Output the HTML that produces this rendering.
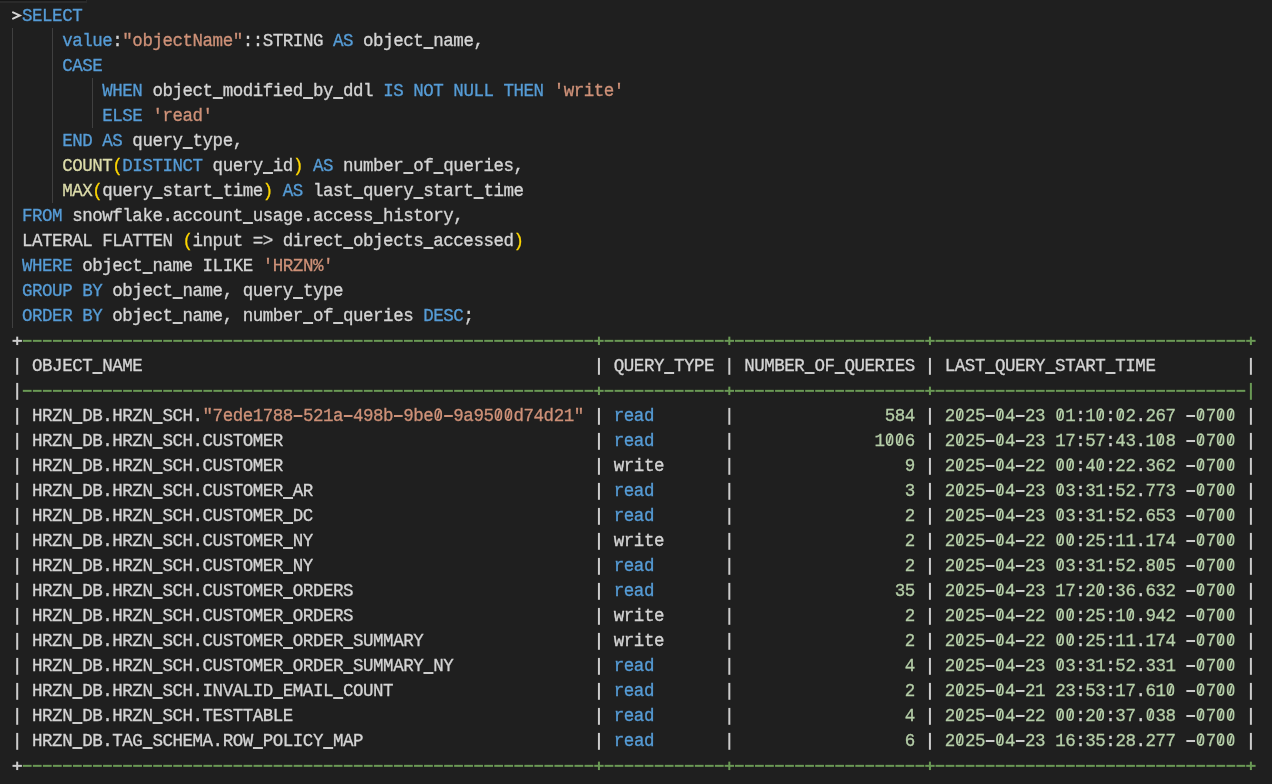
<!DOCTYPE html>
<html><head><meta charset="utf-8"><style>
html,body{margin:0;padding:0;}
body{width:1272px;height:784px;overflow:hidden;background:#1f1f1f;position:relative;}
.l{position:absolute;left:11.649999999999999px;height:25px;line-height:25px;white-space:pre;font-family:"Liberation Mono",monospace;font-size:17.5px;letter-spacing:-0.4717px;color:#d4d4d4;transform:scaleY(1.08);transform-origin:0 18px;will-change:transform;-webkit-text-stroke:0.3px currentColor;}
.tx{color:#d4d4d4} .kw{color:#569cd6} .st{color:#ce9178} .fn{color:#dcdcaa} .br{color:#ffd700} .nm{color:#b5cea8}
.g{position:absolute;width:1px;background:#404040;}
.tb{position:absolute;left:0;top:0;width:86px;height:1px;background:#161616;border-bottom:2px solid #2a2a2a;border-right:1px solid #2a2a2a;}
</style></head><body>
<div class="tb"></div>
<div class="g" style="left:12px;top:28px;height:300px"></div><div class="g" style="left:52px;top:28px;height:175px"></div><div class="g" style="left:92px;top:78px;height:50px"></div>
<svg width="1272" height="784" style="position:absolute;left:0;top:0"><polyline points="13.0,12.3 19.8,15.45 13.0,18.6" fill="none" stroke="#d4d4d4" stroke-width="2" stroke-linecap="round" stroke-linejoin="miter"/><rect x="423.43" y="47.00" width="10.0" height="2" fill="#cccccc"/><rect x="212.80" y="97.00" width="10.0" height="2" fill="#cccccc"/><rect x="303.07" y="97.00" width="10.0" height="2" fill="#cccccc"/><rect x="333.16" y="97.00" width="10.0" height="2" fill="#cccccc"/><rect x="182.71" y="147.00" width="10.0" height="2" fill="#cccccc"/><rect x="262.95" y="172.00" width="10.0" height="2" fill="#cccccc"/><rect x="403.37" y="172.00" width="10.0" height="2" fill="#cccccc"/><rect x="433.46" y="172.00" width="10.0" height="2" fill="#cccccc"/><rect x="152.62" y="197.00" width="10.0" height="2" fill="#cccccc"/><rect x="212.80" y="197.00" width="10.0" height="2" fill="#cccccc"/><rect x="353.22" y="197.00" width="10.0" height="2" fill="#cccccc"/><rect x="413.40" y="197.00" width="10.0" height="2" fill="#cccccc"/><rect x="473.58" y="197.00" width="10.0" height="2" fill="#cccccc"/><rect x="242.89" y="222.00" width="10.0" height="2" fill="#cccccc"/><rect x="373.28" y="222.00" width="10.0" height="2" fill="#cccccc"/><rect x="343.19" y="247.00" width="10.0" height="2" fill="#cccccc"/><rect x="423.43" y="247.00" width="10.0" height="2" fill="#cccccc"/><rect x="142.59" y="272.00" width="10.0" height="2" fill="#cccccc"/><rect x="172.68" y="297.00" width="10.0" height="2" fill="#cccccc"/><rect x="293.04" y="297.00" width="10.0" height="2" fill="#cccccc"/><rect x="172.68" y="322.00" width="10.0" height="2" fill="#cccccc"/><rect x="303.07" y="322.00" width="10.0" height="2" fill="#cccccc"/><rect x="333.16" y="322.00" width="10.0" height="2" fill="#cccccc"/><rect x="12.50" y="339.85" width="9.4" height="2" fill="#cccccc"/><rect x="16.20" y="336.65" width="2" height="8.4" fill="#cccccc"/><rect x="22.83" y="339.85" width="8.8" height="2" fill="#6a9955"/><rect x="32.86" y="339.85" width="8.8" height="2" fill="#6a9955"/><rect x="42.89" y="339.85" width="8.8" height="2" fill="#6a9955"/><rect x="52.92" y="339.85" width="8.8" height="2" fill="#6a9955"/><rect x="62.95" y="339.85" width="8.8" height="2" fill="#6a9955"/><rect x="72.98" y="339.85" width="8.8" height="2" fill="#6a9955"/><rect x="83.01" y="339.85" width="8.8" height="2" fill="#6a9955"/><rect x="93.04" y="339.85" width="8.8" height="2" fill="#6a9955"/><rect x="103.07" y="339.85" width="8.8" height="2" fill="#6a9955"/><rect x="113.10" y="339.85" width="8.8" height="2" fill="#6a9955"/><rect x="123.13" y="339.85" width="8.8" height="2" fill="#6a9955"/><rect x="133.16" y="339.85" width="8.8" height="2" fill="#6a9955"/><rect x="143.19" y="339.85" width="8.8" height="2" fill="#6a9955"/><rect x="153.22" y="339.85" width="8.8" height="2" fill="#6a9955"/><rect x="163.25" y="339.85" width="8.8" height="2" fill="#6a9955"/><rect x="173.28" y="339.85" width="8.8" height="2" fill="#6a9955"/><rect x="183.31" y="339.85" width="8.8" height="2" fill="#6a9955"/><rect x="193.34" y="339.85" width="8.8" height="2" fill="#6a9955"/><rect x="203.37" y="339.85" width="8.8" height="2" fill="#6a9955"/><rect x="213.40" y="339.85" width="8.8" height="2" fill="#6a9955"/><rect x="223.43" y="339.85" width="8.8" height="2" fill="#6a9955"/><rect x="233.46" y="339.85" width="8.8" height="2" fill="#6a9955"/><rect x="243.49" y="339.85" width="8.8" height="2" fill="#6a9955"/><rect x="253.52" y="339.85" width="8.8" height="2" fill="#6a9955"/><rect x="263.55" y="339.85" width="8.8" height="2" fill="#6a9955"/><rect x="273.58" y="339.85" width="8.8" height="2" fill="#6a9955"/><rect x="283.61" y="339.85" width="8.8" height="2" fill="#6a9955"/><rect x="293.64" y="339.85" width="8.8" height="2" fill="#6a9955"/><rect x="303.67" y="339.85" width="8.8" height="2" fill="#6a9955"/><rect x="313.70" y="339.85" width="8.8" height="2" fill="#6a9955"/><rect x="323.73" y="339.85" width="8.8" height="2" fill="#6a9955"/><rect x="333.76" y="339.85" width="8.8" height="2" fill="#6a9955"/><rect x="343.79" y="339.85" width="8.8" height="2" fill="#6a9955"/><rect x="353.82" y="339.85" width="8.8" height="2" fill="#6a9955"/><rect x="363.85" y="339.85" width="8.8" height="2" fill="#6a9955"/><rect x="373.88" y="339.85" width="8.8" height="2" fill="#6a9955"/><rect x="383.91" y="339.85" width="8.8" height="2" fill="#6a9955"/><rect x="393.94" y="339.85" width="8.8" height="2" fill="#6a9955"/><rect x="403.97" y="339.85" width="8.8" height="2" fill="#6a9955"/><rect x="414.00" y="339.85" width="8.8" height="2" fill="#6a9955"/><rect x="424.03" y="339.85" width="8.8" height="2" fill="#6a9955"/><rect x="434.06" y="339.85" width="8.8" height="2" fill="#6a9955"/><rect x="444.09" y="339.85" width="8.8" height="2" fill="#6a9955"/><rect x="454.12" y="339.85" width="8.8" height="2" fill="#6a9955"/><rect x="464.15" y="339.85" width="8.8" height="2" fill="#6a9955"/><rect x="474.18" y="339.85" width="8.8" height="2" fill="#6a9955"/><rect x="484.21" y="339.85" width="8.8" height="2" fill="#6a9955"/><rect x="494.24" y="339.85" width="8.8" height="2" fill="#6a9955"/><rect x="504.27" y="339.85" width="8.8" height="2" fill="#6a9955"/><rect x="514.30" y="339.85" width="8.8" height="2" fill="#6a9955"/><rect x="524.33" y="339.85" width="8.8" height="2" fill="#6a9955"/><rect x="534.36" y="339.85" width="8.8" height="2" fill="#6a9955"/><rect x="544.39" y="339.85" width="8.8" height="2" fill="#6a9955"/><rect x="554.42" y="339.85" width="8.8" height="2" fill="#6a9955"/><rect x="564.45" y="339.85" width="8.8" height="2" fill="#6a9955"/><rect x="574.48" y="339.85" width="8.8" height="2" fill="#6a9955"/><rect x="584.51" y="339.85" width="8.8" height="2" fill="#6a9955"/><rect x="594.24" y="339.85" width="9.4" height="2" fill="#6a9955"/><rect x="597.94" y="336.65" width="2" height="8.4" fill="#6a9955"/><rect x="604.57" y="339.85" width="8.8" height="2" fill="#6a9955"/><rect x="614.60" y="339.85" width="8.8" height="2" fill="#6a9955"/><rect x="624.63" y="339.85" width="8.8" height="2" fill="#6a9955"/><rect x="634.66" y="339.85" width="8.8" height="2" fill="#6a9955"/><rect x="644.69" y="339.85" width="8.8" height="2" fill="#6a9955"/><rect x="654.72" y="339.85" width="8.8" height="2" fill="#6a9955"/><rect x="664.75" y="339.85" width="8.8" height="2" fill="#6a9955"/><rect x="674.78" y="339.85" width="8.8" height="2" fill="#6a9955"/><rect x="684.81" y="339.85" width="8.8" height="2" fill="#6a9955"/><rect x="694.84" y="339.85" width="8.8" height="2" fill="#6a9955"/><rect x="704.87" y="339.85" width="8.8" height="2" fill="#6a9955"/><rect x="714.90" y="339.85" width="8.8" height="2" fill="#6a9955"/><rect x="724.63" y="339.85" width="9.4" height="2" fill="#6a9955"/><rect x="728.33" y="336.65" width="2" height="8.4" fill="#6a9955"/><rect x="734.96" y="339.85" width="8.8" height="2" fill="#6a9955"/><rect x="744.99" y="339.85" width="8.8" height="2" fill="#6a9955"/><rect x="755.02" y="339.85" width="8.8" height="2" fill="#6a9955"/><rect x="765.05" y="339.85" width="8.8" height="2" fill="#6a9955"/><rect x="775.08" y="339.85" width="8.8" height="2" fill="#6a9955"/><rect x="785.11" y="339.85" width="8.8" height="2" fill="#6a9955"/><rect x="795.14" y="339.85" width="8.8" height="2" fill="#6a9955"/><rect x="805.17" y="339.85" width="8.8" height="2" fill="#6a9955"/><rect x="815.20" y="339.85" width="8.8" height="2" fill="#6a9955"/><rect x="825.23" y="339.85" width="8.8" height="2" fill="#6a9955"/><rect x="835.26" y="339.85" width="8.8" height="2" fill="#6a9955"/><rect x="845.29" y="339.85" width="8.8" height="2" fill="#6a9955"/><rect x="855.32" y="339.85" width="8.8" height="2" fill="#6a9955"/><rect x="865.35" y="339.85" width="8.8" height="2" fill="#6a9955"/><rect x="875.38" y="339.85" width="8.8" height="2" fill="#6a9955"/><rect x="885.41" y="339.85" width="8.8" height="2" fill="#6a9955"/><rect x="895.44" y="339.85" width="8.8" height="2" fill="#6a9955"/><rect x="905.47" y="339.85" width="8.8" height="2" fill="#6a9955"/><rect x="915.50" y="339.85" width="8.8" height="2" fill="#6a9955"/><rect x="925.23" y="339.85" width="9.4" height="2" fill="#6a9955"/><rect x="928.93" y="336.65" width="2" height="8.4" fill="#6a9955"/><rect x="935.56" y="339.85" width="8.8" height="2" fill="#6a9955"/><rect x="945.59" y="339.85" width="8.8" height="2" fill="#6a9955"/><rect x="955.62" y="339.85" width="8.8" height="2" fill="#6a9955"/><rect x="965.65" y="339.85" width="8.8" height="2" fill="#6a9955"/><rect x="975.68" y="339.85" width="8.8" height="2" fill="#6a9955"/><rect x="985.71" y="339.85" width="8.8" height="2" fill="#6a9955"/><rect x="995.74" y="339.85" width="8.8" height="2" fill="#6a9955"/><rect x="1005.77" y="339.85" width="8.8" height="2" fill="#6a9955"/><rect x="1015.80" y="339.85" width="8.8" height="2" fill="#6a9955"/><rect x="1025.83" y="339.85" width="8.8" height="2" fill="#6a9955"/><rect x="1035.86" y="339.85" width="8.8" height="2" fill="#6a9955"/><rect x="1045.89" y="339.85" width="8.8" height="2" fill="#6a9955"/><rect x="1055.92" y="339.85" width="8.8" height="2" fill="#6a9955"/><rect x="1065.95" y="339.85" width="8.8" height="2" fill="#6a9955"/><rect x="1075.98" y="339.85" width="8.8" height="2" fill="#6a9955"/><rect x="1086.01" y="339.85" width="8.8" height="2" fill="#6a9955"/><rect x="1096.04" y="339.85" width="8.8" height="2" fill="#6a9955"/><rect x="1106.07" y="339.85" width="8.8" height="2" fill="#6a9955"/><rect x="1116.10" y="339.85" width="8.8" height="2" fill="#6a9955"/><rect x="1126.13" y="339.85" width="8.8" height="2" fill="#6a9955"/><rect x="1136.16" y="339.85" width="8.8" height="2" fill="#6a9955"/><rect x="1146.19" y="339.85" width="8.8" height="2" fill="#6a9955"/><rect x="1156.22" y="339.85" width="8.8" height="2" fill="#6a9955"/><rect x="1166.25" y="339.85" width="8.8" height="2" fill="#6a9955"/><rect x="1176.28" y="339.85" width="8.8" height="2" fill="#6a9955"/><rect x="1186.31" y="339.85" width="8.8" height="2" fill="#6a9955"/><rect x="1196.34" y="339.85" width="8.8" height="2" fill="#6a9955"/><rect x="1206.37" y="339.85" width="8.8" height="2" fill="#6a9955"/><rect x="1216.40" y="339.85" width="8.8" height="2" fill="#6a9955"/><rect x="1226.43" y="339.85" width="8.8" height="2" fill="#6a9955"/><rect x="1236.46" y="339.85" width="8.8" height="2" fill="#6a9955"/><rect x="1246.19" y="339.85" width="9.4" height="2" fill="#6a9955"/><rect x="1249.89" y="336.65" width="2" height="8.4" fill="#6a9955"/><rect x="16.20" y="357.90" width="2" height="16.9" fill="#cccccc"/><rect x="92.44" y="372.00" width="10.0" height="2" fill="#cccccc"/><rect x="597.94" y="357.90" width="2" height="16.9" fill="#cccccc"/><rect x="664.15" y="372.00" width="10.0" height="2" fill="#cccccc"/><rect x="728.33" y="357.90" width="2" height="16.9" fill="#cccccc"/><rect x="804.57" y="372.00" width="10.0" height="2" fill="#cccccc"/><rect x="834.66" y="372.00" width="10.0" height="2" fill="#cccccc"/><rect x="928.93" y="357.90" width="2" height="16.9" fill="#cccccc"/><rect x="985.11" y="372.00" width="10.0" height="2" fill="#cccccc"/><rect x="1045.29" y="372.00" width="10.0" height="2" fill="#cccccc"/><rect x="1105.47" y="372.00" width="10.0" height="2" fill="#cccccc"/><rect x="1249.89" y="357.90" width="2" height="16.9" fill="#cccccc"/><rect x="16.20" y="382.90" width="2" height="16.9" fill="#cccccc"/><rect x="22.83" y="389.85" width="8.8" height="2" fill="#6a9955"/><rect x="32.86" y="389.85" width="8.8" height="2" fill="#6a9955"/><rect x="42.89" y="389.85" width="8.8" height="2" fill="#6a9955"/><rect x="52.92" y="389.85" width="8.8" height="2" fill="#6a9955"/><rect x="62.95" y="389.85" width="8.8" height="2" fill="#6a9955"/><rect x="72.98" y="389.85" width="8.8" height="2" fill="#6a9955"/><rect x="83.01" y="389.85" width="8.8" height="2" fill="#6a9955"/><rect x="93.04" y="389.85" width="8.8" height="2" fill="#6a9955"/><rect x="103.07" y="389.85" width="8.8" height="2" fill="#6a9955"/><rect x="113.10" y="389.85" width="8.8" height="2" fill="#6a9955"/><rect x="123.13" y="389.85" width="8.8" height="2" fill="#6a9955"/><rect x="133.16" y="389.85" width="8.8" height="2" fill="#6a9955"/><rect x="143.19" y="389.85" width="8.8" height="2" fill="#6a9955"/><rect x="153.22" y="389.85" width="8.8" height="2" fill="#6a9955"/><rect x="163.25" y="389.85" width="8.8" height="2" fill="#6a9955"/><rect x="173.28" y="389.85" width="8.8" height="2" fill="#6a9955"/><rect x="183.31" y="389.85" width="8.8" height="2" fill="#6a9955"/><rect x="193.34" y="389.85" width="8.8" height="2" fill="#6a9955"/><rect x="203.37" y="389.85" width="8.8" height="2" fill="#6a9955"/><rect x="213.40" y="389.85" width="8.8" height="2" fill="#6a9955"/><rect x="223.43" y="389.85" width="8.8" height="2" fill="#6a9955"/><rect x="233.46" y="389.85" width="8.8" height="2" fill="#6a9955"/><rect x="243.49" y="389.85" width="8.8" height="2" fill="#6a9955"/><rect x="253.52" y="389.85" width="8.8" height="2" fill="#6a9955"/><rect x="263.55" y="389.85" width="8.8" height="2" fill="#6a9955"/><rect x="273.58" y="389.85" width="8.8" height="2" fill="#6a9955"/><rect x="283.61" y="389.85" width="8.8" height="2" fill="#6a9955"/><rect x="293.64" y="389.85" width="8.8" height="2" fill="#6a9955"/><rect x="303.67" y="389.85" width="8.8" height="2" fill="#6a9955"/><rect x="313.70" y="389.85" width="8.8" height="2" fill="#6a9955"/><rect x="323.73" y="389.85" width="8.8" height="2" fill="#6a9955"/><rect x="333.76" y="389.85" width="8.8" height="2" fill="#6a9955"/><rect x="343.79" y="389.85" width="8.8" height="2" fill="#6a9955"/><rect x="353.82" y="389.85" width="8.8" height="2" fill="#6a9955"/><rect x="363.85" y="389.85" width="8.8" height="2" fill="#6a9955"/><rect x="373.88" y="389.85" width="8.8" height="2" fill="#6a9955"/><rect x="383.91" y="389.85" width="8.8" height="2" fill="#6a9955"/><rect x="393.94" y="389.85" width="8.8" height="2" fill="#6a9955"/><rect x="403.97" y="389.85" width="8.8" height="2" fill="#6a9955"/><rect x="414.00" y="389.85" width="8.8" height="2" fill="#6a9955"/><rect x="424.03" y="389.85" width="8.8" height="2" fill="#6a9955"/><rect x="434.06" y="389.85" width="8.8" height="2" fill="#6a9955"/><rect x="444.09" y="389.85" width="8.8" height="2" fill="#6a9955"/><rect x="454.12" y="389.85" width="8.8" height="2" fill="#6a9955"/><rect x="464.15" y="389.85" width="8.8" height="2" fill="#6a9955"/><rect x="474.18" y="389.85" width="8.8" height="2" fill="#6a9955"/><rect x="484.21" y="389.85" width="8.8" height="2" fill="#6a9955"/><rect x="494.24" y="389.85" width="8.8" height="2" fill="#6a9955"/><rect x="504.27" y="389.85" width="8.8" height="2" fill="#6a9955"/><rect x="514.30" y="389.85" width="8.8" height="2" fill="#6a9955"/><rect x="524.33" y="389.85" width="8.8" height="2" fill="#6a9955"/><rect x="534.36" y="389.85" width="8.8" height="2" fill="#6a9955"/><rect x="544.39" y="389.85" width="8.8" height="2" fill="#6a9955"/><rect x="554.42" y="389.85" width="8.8" height="2" fill="#6a9955"/><rect x="564.45" y="389.85" width="8.8" height="2" fill="#6a9955"/><rect x="574.48" y="389.85" width="8.8" height="2" fill="#6a9955"/><rect x="584.51" y="389.85" width="8.8" height="2" fill="#6a9955"/><rect x="594.24" y="389.85" width="9.4" height="2" fill="#6a9955"/><rect x="597.94" y="386.65" width="2" height="8.4" fill="#6a9955"/><rect x="604.57" y="389.85" width="8.8" height="2" fill="#6a9955"/><rect x="614.60" y="389.85" width="8.8" height="2" fill="#6a9955"/><rect x="624.63" y="389.85" width="8.8" height="2" fill="#6a9955"/><rect x="634.66" y="389.85" width="8.8" height="2" fill="#6a9955"/><rect x="644.69" y="389.85" width="8.8" height="2" fill="#6a9955"/><rect x="654.72" y="389.85" width="8.8" height="2" fill="#6a9955"/><rect x="664.75" y="389.85" width="8.8" height="2" fill="#6a9955"/><rect x="674.78" y="389.85" width="8.8" height="2" fill="#6a9955"/><rect x="684.81" y="389.85" width="8.8" height="2" fill="#6a9955"/><rect x="694.84" y="389.85" width="8.8" height="2" fill="#6a9955"/><rect x="704.87" y="389.85" width="8.8" height="2" fill="#6a9955"/><rect x="714.90" y="389.85" width="8.8" height="2" fill="#6a9955"/><rect x="724.63" y="389.85" width="9.4" height="2" fill="#6a9955"/><rect x="728.33" y="386.65" width="2" height="8.4" fill="#6a9955"/><rect x="734.96" y="389.85" width="8.8" height="2" fill="#6a9955"/><rect x="744.99" y="389.85" width="8.8" height="2" fill="#6a9955"/><rect x="755.02" y="389.85" width="8.8" height="2" fill="#6a9955"/><rect x="765.05" y="389.85" width="8.8" height="2" fill="#6a9955"/><rect x="775.08" y="389.85" width="8.8" height="2" fill="#6a9955"/><rect x="785.11" y="389.85" width="8.8" height="2" fill="#6a9955"/><rect x="795.14" y="389.85" width="8.8" height="2" fill="#6a9955"/><rect x="805.17" y="389.85" width="8.8" height="2" fill="#6a9955"/><rect x="815.20" y="389.85" width="8.8" height="2" fill="#6a9955"/><rect x="825.23" y="389.85" width="8.8" height="2" fill="#6a9955"/><rect x="835.26" y="389.85" width="8.8" height="2" fill="#6a9955"/><rect x="845.29" y="389.85" width="8.8" height="2" fill="#6a9955"/><rect x="855.32" y="389.85" width="8.8" height="2" fill="#6a9955"/><rect x="865.35" y="389.85" width="8.8" height="2" fill="#6a9955"/><rect x="875.38" y="389.85" width="8.8" height="2" fill="#6a9955"/><rect x="885.41" y="389.85" width="8.8" height="2" fill="#6a9955"/><rect x="895.44" y="389.85" width="8.8" height="2" fill="#6a9955"/><rect x="905.47" y="389.85" width="8.8" height="2" fill="#6a9955"/><rect x="915.50" y="389.85" width="8.8" height="2" fill="#6a9955"/><rect x="925.23" y="389.85" width="9.4" height="2" fill="#6a9955"/><rect x="928.93" y="386.65" width="2" height="8.4" fill="#6a9955"/><rect x="935.56" y="389.85" width="8.8" height="2" fill="#6a9955"/><rect x="945.59" y="389.85" width="8.8" height="2" fill="#6a9955"/><rect x="955.62" y="389.85" width="8.8" height="2" fill="#6a9955"/><rect x="965.65" y="389.85" width="8.8" height="2" fill="#6a9955"/><rect x="975.68" y="389.85" width="8.8" height="2" fill="#6a9955"/><rect x="985.71" y="389.85" width="8.8" height="2" fill="#6a9955"/><rect x="995.74" y="389.85" width="8.8" height="2" fill="#6a9955"/><rect x="1005.77" y="389.85" width="8.8" height="2" fill="#6a9955"/><rect x="1015.80" y="389.85" width="8.8" height="2" fill="#6a9955"/><rect x="1025.83" y="389.85" width="8.8" height="2" fill="#6a9955"/><rect x="1035.86" y="389.85" width="8.8" height="2" fill="#6a9955"/><rect x="1045.89" y="389.85" width="8.8" height="2" fill="#6a9955"/><rect x="1055.92" y="389.85" width="8.8" height="2" fill="#6a9955"/><rect x="1065.95" y="389.85" width="8.8" height="2" fill="#6a9955"/><rect x="1075.98" y="389.85" width="8.8" height="2" fill="#6a9955"/><rect x="1086.01" y="389.85" width="8.8" height="2" fill="#6a9955"/><rect x="1096.04" y="389.85" width="8.8" height="2" fill="#6a9955"/><rect x="1106.07" y="389.85" width="8.8" height="2" fill="#6a9955"/><rect x="1116.10" y="389.85" width="8.8" height="2" fill="#6a9955"/><rect x="1126.13" y="389.85" width="8.8" height="2" fill="#6a9955"/><rect x="1136.16" y="389.85" width="8.8" height="2" fill="#6a9955"/><rect x="1146.19" y="389.85" width="8.8" height="2" fill="#6a9955"/><rect x="1156.22" y="389.85" width="8.8" height="2" fill="#6a9955"/><rect x="1166.25" y="389.85" width="8.8" height="2" fill="#6a9955"/><rect x="1176.28" y="389.85" width="8.8" height="2" fill="#6a9955"/><rect x="1186.31" y="389.85" width="8.8" height="2" fill="#6a9955"/><rect x="1196.34" y="389.85" width="8.8" height="2" fill="#6a9955"/><rect x="1206.37" y="389.85" width="8.8" height="2" fill="#6a9955"/><rect x="1216.40" y="389.85" width="8.8" height="2" fill="#6a9955"/><rect x="1226.43" y="389.85" width="8.8" height="2" fill="#6a9955"/><rect x="1236.46" y="389.85" width="8.8" height="2" fill="#6a9955"/><rect x="1249.89" y="382.90" width="2" height="16.9" fill="#6a9955"/><rect x="16.20" y="407.90" width="2" height="16.9" fill="#cccccc"/><rect x="72.38" y="422.00" width="10.0" height="2" fill="#cccccc"/><rect x="152.62" y="422.00" width="10.0" height="2" fill="#cccccc"/><rect x="293.69" y="415.00" width="8.7" height="2" fill="#ce9178"/><rect x="343.84" y="415.00" width="8.7" height="2" fill="#ce9178"/><rect x="393.99" y="415.00" width="8.7" height="2" fill="#ce9178"/><rect x="435.36" y="409.20" width="5.8" height="11.0" rx="2.90" ry="3.6" fill="none" stroke="#ce9178" stroke-width="1.75"/><line x1="439.16" y1="411.30" x2="437.56" y2="417.70" stroke="#ce9178" stroke-width="1.7" stroke-linecap="round"/><rect x="444.14" y="415.00" width="8.7" height="2" fill="#ce9178"/><rect x="495.54" y="409.20" width="5.8" height="11.0" rx="2.90" ry="3.6" fill="none" stroke="#ce9178" stroke-width="1.75"/><line x1="499.34" y1="411.30" x2="497.74" y2="417.70" stroke="#ce9178" stroke-width="1.7" stroke-linecap="round"/><rect x="505.57" y="409.20" width="5.8" height="11.0" rx="2.90" ry="3.6" fill="none" stroke="#ce9178" stroke-width="1.75"/><line x1="509.37" y1="411.30" x2="507.77" y2="417.70" stroke="#ce9178" stroke-width="1.7" stroke-linecap="round"/><rect x="597.94" y="407.90" width="2" height="16.9" fill="#cccccc"/><rect x="728.33" y="407.90" width="2" height="16.9" fill="#cccccc"/><rect x="928.93" y="407.90" width="2" height="16.9" fill="#cccccc"/><rect x="956.92" y="409.20" width="5.8" height="11.0" rx="2.90" ry="3.6" fill="none" stroke="#b5cea8" stroke-width="1.75"/><line x1="960.72" y1="411.30" x2="959.12" y2="417.70" stroke="#b5cea8" stroke-width="1.7" stroke-linecap="round"/><rect x="985.76" y="415.00" width="8.7" height="2" fill="#cccccc"/><rect x="997.04" y="409.20" width="5.8" height="11.0" rx="2.90" ry="3.6" fill="none" stroke="#b5cea8" stroke-width="1.75"/><line x1="1000.84" y1="411.30" x2="999.24" y2="417.70" stroke="#b5cea8" stroke-width="1.7" stroke-linecap="round"/><rect x="1015.85" y="415.00" width="8.7" height="2" fill="#cccccc"/><rect x="1057.22" y="409.20" width="5.8" height="11.0" rx="2.90" ry="3.6" fill="none" stroke="#b5cea8" stroke-width="1.75"/><line x1="1061.02" y1="411.30" x2="1059.42" y2="417.70" stroke="#b5cea8" stroke-width="1.7" stroke-linecap="round"/><rect x="1097.34" y="409.20" width="5.8" height="11.0" rx="2.90" ry="3.6" fill="none" stroke="#b5cea8" stroke-width="1.75"/><line x1="1101.14" y1="411.30" x2="1099.54" y2="417.70" stroke="#b5cea8" stroke-width="1.7" stroke-linecap="round"/><rect x="1117.40" y="409.20" width="5.8" height="11.0" rx="2.90" ry="3.6" fill="none" stroke="#b5cea8" stroke-width="1.75"/><line x1="1121.20" y1="411.30" x2="1119.60" y2="417.70" stroke="#b5cea8" stroke-width="1.7" stroke-linecap="round"/><rect x="1186.36" y="415.00" width="8.7" height="2" fill="#cccccc"/><rect x="1197.64" y="409.20" width="5.8" height="11.0" rx="2.90" ry="3.6" fill="none" stroke="#b5cea8" stroke-width="1.75"/><line x1="1201.44" y1="411.30" x2="1199.84" y2="417.70" stroke="#b5cea8" stroke-width="1.7" stroke-linecap="round"/><rect x="1217.70" y="409.20" width="5.8" height="11.0" rx="2.90" ry="3.6" fill="none" stroke="#b5cea8" stroke-width="1.75"/><line x1="1221.50" y1="411.30" x2="1219.90" y2="417.70" stroke="#b5cea8" stroke-width="1.7" stroke-linecap="round"/><rect x="1227.73" y="409.20" width="5.8" height="11.0" rx="2.90" ry="3.6" fill="none" stroke="#b5cea8" stroke-width="1.75"/><line x1="1231.53" y1="411.30" x2="1229.93" y2="417.70" stroke="#b5cea8" stroke-width="1.7" stroke-linecap="round"/><rect x="1249.89" y="407.90" width="2" height="16.9" fill="#cccccc"/><rect x="16.20" y="432.90" width="2" height="16.9" fill="#cccccc"/><rect x="72.38" y="447.00" width="10.0" height="2" fill="#cccccc"/><rect x="152.62" y="447.00" width="10.0" height="2" fill="#cccccc"/><rect x="597.94" y="432.90" width="2" height="16.9" fill="#cccccc"/><rect x="728.33" y="432.90" width="2" height="16.9" fill="#cccccc"/><rect x="886.71" y="434.20" width="5.8" height="11.0" rx="2.90" ry="3.6" fill="none" stroke="#b5cea8" stroke-width="1.75"/><line x1="890.51" y1="436.30" x2="888.91" y2="442.70" stroke="#b5cea8" stroke-width="1.7" stroke-linecap="round"/><rect x="896.74" y="434.20" width="5.8" height="11.0" rx="2.90" ry="3.6" fill="none" stroke="#b5cea8" stroke-width="1.75"/><line x1="900.54" y1="436.30" x2="898.94" y2="442.70" stroke="#b5cea8" stroke-width="1.7" stroke-linecap="round"/><rect x="928.93" y="432.90" width="2" height="16.9" fill="#cccccc"/><rect x="956.92" y="434.20" width="5.8" height="11.0" rx="2.90" ry="3.6" fill="none" stroke="#b5cea8" stroke-width="1.75"/><line x1="960.72" y1="436.30" x2="959.12" y2="442.70" stroke="#b5cea8" stroke-width="1.7" stroke-linecap="round"/><rect x="985.76" y="440.00" width="8.7" height="2" fill="#cccccc"/><rect x="997.04" y="434.20" width="5.8" height="11.0" rx="2.90" ry="3.6" fill="none" stroke="#b5cea8" stroke-width="1.75"/><line x1="1000.84" y1="436.30" x2="999.24" y2="442.70" stroke="#b5cea8" stroke-width="1.7" stroke-linecap="round"/><rect x="1015.85" y="440.00" width="8.7" height="2" fill="#cccccc"/><rect x="1157.52" y="434.20" width="5.8" height="11.0" rx="2.90" ry="3.6" fill="none" stroke="#b5cea8" stroke-width="1.75"/><line x1="1161.32" y1="436.30" x2="1159.72" y2="442.70" stroke="#b5cea8" stroke-width="1.7" stroke-linecap="round"/><rect x="1186.36" y="440.00" width="8.7" height="2" fill="#cccccc"/><rect x="1197.64" y="434.20" width="5.8" height="11.0" rx="2.90" ry="3.6" fill="none" stroke="#b5cea8" stroke-width="1.75"/><line x1="1201.44" y1="436.30" x2="1199.84" y2="442.70" stroke="#b5cea8" stroke-width="1.7" stroke-linecap="round"/><rect x="1217.70" y="434.20" width="5.8" height="11.0" rx="2.90" ry="3.6" fill="none" stroke="#b5cea8" stroke-width="1.75"/><line x1="1221.50" y1="436.30" x2="1219.90" y2="442.70" stroke="#b5cea8" stroke-width="1.7" stroke-linecap="round"/><rect x="1227.73" y="434.20" width="5.8" height="11.0" rx="2.90" ry="3.6" fill="none" stroke="#b5cea8" stroke-width="1.75"/><line x1="1231.53" y1="436.30" x2="1229.93" y2="442.70" stroke="#b5cea8" stroke-width="1.7" stroke-linecap="round"/><rect x="1249.89" y="432.90" width="2" height="16.9" fill="#cccccc"/><rect x="16.20" y="457.90" width="2" height="16.9" fill="#cccccc"/><rect x="72.38" y="472.00" width="10.0" height="2" fill="#cccccc"/><rect x="152.62" y="472.00" width="10.0" height="2" fill="#cccccc"/><rect x="597.94" y="457.90" width="2" height="16.9" fill="#cccccc"/><rect x="728.33" y="457.90" width="2" height="16.9" fill="#cccccc"/><rect x="928.93" y="457.90" width="2" height="16.9" fill="#cccccc"/><rect x="956.92" y="459.20" width="5.8" height="11.0" rx="2.90" ry="3.6" fill="none" stroke="#b5cea8" stroke-width="1.75"/><line x1="960.72" y1="461.30" x2="959.12" y2="467.70" stroke="#b5cea8" stroke-width="1.7" stroke-linecap="round"/><rect x="985.76" y="465.00" width="8.7" height="2" fill="#cccccc"/><rect x="997.04" y="459.20" width="5.8" height="11.0" rx="2.90" ry="3.6" fill="none" stroke="#b5cea8" stroke-width="1.75"/><line x1="1000.84" y1="461.30" x2="999.24" y2="467.70" stroke="#b5cea8" stroke-width="1.7" stroke-linecap="round"/><rect x="1015.85" y="465.00" width="8.7" height="2" fill="#cccccc"/><rect x="1057.22" y="459.20" width="5.8" height="11.0" rx="2.90" ry="3.6" fill="none" stroke="#b5cea8" stroke-width="1.75"/><line x1="1061.02" y1="461.30" x2="1059.42" y2="467.70" stroke="#b5cea8" stroke-width="1.7" stroke-linecap="round"/><rect x="1067.25" y="459.20" width="5.8" height="11.0" rx="2.90" ry="3.6" fill="none" stroke="#b5cea8" stroke-width="1.75"/><line x1="1071.05" y1="461.30" x2="1069.45" y2="467.70" stroke="#b5cea8" stroke-width="1.7" stroke-linecap="round"/><rect x="1097.34" y="459.20" width="5.8" height="11.0" rx="2.90" ry="3.6" fill="none" stroke="#b5cea8" stroke-width="1.75"/><line x1="1101.14" y1="461.30" x2="1099.54" y2="467.70" stroke="#b5cea8" stroke-width="1.7" stroke-linecap="round"/><rect x="1186.36" y="465.00" width="8.7" height="2" fill="#cccccc"/><rect x="1197.64" y="459.20" width="5.8" height="11.0" rx="2.90" ry="3.6" fill="none" stroke="#b5cea8" stroke-width="1.75"/><line x1="1201.44" y1="461.30" x2="1199.84" y2="467.70" stroke="#b5cea8" stroke-width="1.7" stroke-linecap="round"/><rect x="1217.70" y="459.20" width="5.8" height="11.0" rx="2.90" ry="3.6" fill="none" stroke="#b5cea8" stroke-width="1.75"/><line x1="1221.50" y1="461.30" x2="1219.90" y2="467.70" stroke="#b5cea8" stroke-width="1.7" stroke-linecap="round"/><rect x="1227.73" y="459.20" width="5.8" height="11.0" rx="2.90" ry="3.6" fill="none" stroke="#b5cea8" stroke-width="1.75"/><line x1="1231.53" y1="461.30" x2="1229.93" y2="467.70" stroke="#b5cea8" stroke-width="1.7" stroke-linecap="round"/><rect x="1249.89" y="457.90" width="2" height="16.9" fill="#cccccc"/><rect x="16.20" y="482.90" width="2" height="16.9" fill="#cccccc"/><rect x="72.38" y="497.00" width="10.0" height="2" fill="#cccccc"/><rect x="152.62" y="497.00" width="10.0" height="2" fill="#cccccc"/><rect x="283.01" y="497.00" width="10.0" height="2" fill="#cccccc"/><rect x="597.94" y="482.90" width="2" height="16.9" fill="#cccccc"/><rect x="728.33" y="482.90" width="2" height="16.9" fill="#cccccc"/><rect x="928.93" y="482.90" width="2" height="16.9" fill="#cccccc"/><rect x="956.92" y="484.20" width="5.8" height="11.0" rx="2.90" ry="3.6" fill="none" stroke="#b5cea8" stroke-width="1.75"/><line x1="960.72" y1="486.30" x2="959.12" y2="492.70" stroke="#b5cea8" stroke-width="1.7" stroke-linecap="round"/><rect x="985.76" y="490.00" width="8.7" height="2" fill="#cccccc"/><rect x="997.04" y="484.20" width="5.8" height="11.0" rx="2.90" ry="3.6" fill="none" stroke="#b5cea8" stroke-width="1.75"/><line x1="1000.84" y1="486.30" x2="999.24" y2="492.70" stroke="#b5cea8" stroke-width="1.7" stroke-linecap="round"/><rect x="1015.85" y="490.00" width="8.7" height="2" fill="#cccccc"/><rect x="1057.22" y="484.20" width="5.8" height="11.0" rx="2.90" ry="3.6" fill="none" stroke="#b5cea8" stroke-width="1.75"/><line x1="1061.02" y1="486.30" x2="1059.42" y2="492.70" stroke="#b5cea8" stroke-width="1.7" stroke-linecap="round"/><rect x="1186.36" y="490.00" width="8.7" height="2" fill="#cccccc"/><rect x="1197.64" y="484.20" width="5.8" height="11.0" rx="2.90" ry="3.6" fill="none" stroke="#b5cea8" stroke-width="1.75"/><line x1="1201.44" y1="486.30" x2="1199.84" y2="492.70" stroke="#b5cea8" stroke-width="1.7" stroke-linecap="round"/><rect x="1217.70" y="484.20" width="5.8" height="11.0" rx="2.90" ry="3.6" fill="none" stroke="#b5cea8" stroke-width="1.75"/><line x1="1221.50" y1="486.30" x2="1219.90" y2="492.70" stroke="#b5cea8" stroke-width="1.7" stroke-linecap="round"/><rect x="1227.73" y="484.20" width="5.8" height="11.0" rx="2.90" ry="3.6" fill="none" stroke="#b5cea8" stroke-width="1.75"/><line x1="1231.53" y1="486.30" x2="1229.93" y2="492.70" stroke="#b5cea8" stroke-width="1.7" stroke-linecap="round"/><rect x="1249.89" y="482.90" width="2" height="16.9" fill="#cccccc"/><rect x="16.20" y="507.90" width="2" height="16.9" fill="#cccccc"/><rect x="72.38" y="522.00" width="10.0" height="2" fill="#cccccc"/><rect x="152.62" y="522.00" width="10.0" height="2" fill="#cccccc"/><rect x="283.01" y="522.00" width="10.0" height="2" fill="#cccccc"/><rect x="597.94" y="507.90" width="2" height="16.9" fill="#cccccc"/><rect x="728.33" y="507.90" width="2" height="16.9" fill="#cccccc"/><rect x="928.93" y="507.90" width="2" height="16.9" fill="#cccccc"/><rect x="956.92" y="509.20" width="5.8" height="11.0" rx="2.90" ry="3.6" fill="none" stroke="#b5cea8" stroke-width="1.75"/><line x1="960.72" y1="511.30" x2="959.12" y2="517.70" stroke="#b5cea8" stroke-width="1.7" stroke-linecap="round"/><rect x="985.76" y="515.00" width="8.7" height="2" fill="#cccccc"/><rect x="997.04" y="509.20" width="5.8" height="11.0" rx="2.90" ry="3.6" fill="none" stroke="#b5cea8" stroke-width="1.75"/><line x1="1000.84" y1="511.30" x2="999.24" y2="517.70" stroke="#b5cea8" stroke-width="1.7" stroke-linecap="round"/><rect x="1015.85" y="515.00" width="8.7" height="2" fill="#cccccc"/><rect x="1057.22" y="509.20" width="5.8" height="11.0" rx="2.90" ry="3.6" fill="none" stroke="#b5cea8" stroke-width="1.75"/><line x1="1061.02" y1="511.30" x2="1059.42" y2="517.70" stroke="#b5cea8" stroke-width="1.7" stroke-linecap="round"/><rect x="1186.36" y="515.00" width="8.7" height="2" fill="#cccccc"/><rect x="1197.64" y="509.20" width="5.8" height="11.0" rx="2.90" ry="3.6" fill="none" stroke="#b5cea8" stroke-width="1.75"/><line x1="1201.44" y1="511.30" x2="1199.84" y2="517.70" stroke="#b5cea8" stroke-width="1.7" stroke-linecap="round"/><rect x="1217.70" y="509.20" width="5.8" height="11.0" rx="2.90" ry="3.6" fill="none" stroke="#b5cea8" stroke-width="1.75"/><line x1="1221.50" y1="511.30" x2="1219.90" y2="517.70" stroke="#b5cea8" stroke-width="1.7" stroke-linecap="round"/><rect x="1227.73" y="509.20" width="5.8" height="11.0" rx="2.90" ry="3.6" fill="none" stroke="#b5cea8" stroke-width="1.75"/><line x1="1231.53" y1="511.30" x2="1229.93" y2="517.70" stroke="#b5cea8" stroke-width="1.7" stroke-linecap="round"/><rect x="1249.89" y="507.90" width="2" height="16.9" fill="#cccccc"/><rect x="16.20" y="532.90" width="2" height="16.9" fill="#cccccc"/><rect x="72.38" y="547.00" width="10.0" height="2" fill="#cccccc"/><rect x="152.62" y="547.00" width="10.0" height="2" fill="#cccccc"/><rect x="283.01" y="547.00" width="10.0" height="2" fill="#cccccc"/><rect x="597.94" y="532.90" width="2" height="16.9" fill="#cccccc"/><rect x="728.33" y="532.90" width="2" height="16.9" fill="#cccccc"/><rect x="928.93" y="532.90" width="2" height="16.9" fill="#cccccc"/><rect x="956.92" y="534.20" width="5.8" height="11.0" rx="2.90" ry="3.6" fill="none" stroke="#b5cea8" stroke-width="1.75"/><line x1="960.72" y1="536.30" x2="959.12" y2="542.70" stroke="#b5cea8" stroke-width="1.7" stroke-linecap="round"/><rect x="985.76" y="540.00" width="8.7" height="2" fill="#cccccc"/><rect x="997.04" y="534.20" width="5.8" height="11.0" rx="2.90" ry="3.6" fill="none" stroke="#b5cea8" stroke-width="1.75"/><line x1="1000.84" y1="536.30" x2="999.24" y2="542.70" stroke="#b5cea8" stroke-width="1.7" stroke-linecap="round"/><rect x="1015.85" y="540.00" width="8.7" height="2" fill="#cccccc"/><rect x="1057.22" y="534.20" width="5.8" height="11.0" rx="2.90" ry="3.6" fill="none" stroke="#b5cea8" stroke-width="1.75"/><line x1="1061.02" y1="536.30" x2="1059.42" y2="542.70" stroke="#b5cea8" stroke-width="1.7" stroke-linecap="round"/><rect x="1067.25" y="534.20" width="5.8" height="11.0" rx="2.90" ry="3.6" fill="none" stroke="#b5cea8" stroke-width="1.75"/><line x1="1071.05" y1="536.30" x2="1069.45" y2="542.70" stroke="#b5cea8" stroke-width="1.7" stroke-linecap="round"/><rect x="1186.36" y="540.00" width="8.7" height="2" fill="#cccccc"/><rect x="1197.64" y="534.20" width="5.8" height="11.0" rx="2.90" ry="3.6" fill="none" stroke="#b5cea8" stroke-width="1.75"/><line x1="1201.44" y1="536.30" x2="1199.84" y2="542.70" stroke="#b5cea8" stroke-width="1.7" stroke-linecap="round"/><rect x="1217.70" y="534.20" width="5.8" height="11.0" rx="2.90" ry="3.6" fill="none" stroke="#b5cea8" stroke-width="1.75"/><line x1="1221.50" y1="536.30" x2="1219.90" y2="542.70" stroke="#b5cea8" stroke-width="1.7" stroke-linecap="round"/><rect x="1227.73" y="534.20" width="5.8" height="11.0" rx="2.90" ry="3.6" fill="none" stroke="#b5cea8" stroke-width="1.75"/><line x1="1231.53" y1="536.30" x2="1229.93" y2="542.70" stroke="#b5cea8" stroke-width="1.7" stroke-linecap="round"/><rect x="1249.89" y="532.90" width="2" height="16.9" fill="#cccccc"/><rect x="16.20" y="557.90" width="2" height="16.9" fill="#cccccc"/><rect x="72.38" y="572.00" width="10.0" height="2" fill="#cccccc"/><rect x="152.62" y="572.00" width="10.0" height="2" fill="#cccccc"/><rect x="283.01" y="572.00" width="10.0" height="2" fill="#cccccc"/><rect x="597.94" y="557.90" width="2" height="16.9" fill="#cccccc"/><rect x="728.33" y="557.90" width="2" height="16.9" fill="#cccccc"/><rect x="928.93" y="557.90" width="2" height="16.9" fill="#cccccc"/><rect x="956.92" y="559.20" width="5.8" height="11.0" rx="2.90" ry="3.6" fill="none" stroke="#b5cea8" stroke-width="1.75"/><line x1="960.72" y1="561.30" x2="959.12" y2="567.70" stroke="#b5cea8" stroke-width="1.7" stroke-linecap="round"/><rect x="985.76" y="565.00" width="8.7" height="2" fill="#cccccc"/><rect x="997.04" y="559.20" width="5.8" height="11.0" rx="2.90" ry="3.6" fill="none" stroke="#b5cea8" stroke-width="1.75"/><line x1="1000.84" y1="561.30" x2="999.24" y2="567.70" stroke="#b5cea8" stroke-width="1.7" stroke-linecap="round"/><rect x="1015.85" y="565.00" width="8.7" height="2" fill="#cccccc"/><rect x="1057.22" y="559.20" width="5.8" height="11.0" rx="2.90" ry="3.6" fill="none" stroke="#b5cea8" stroke-width="1.75"/><line x1="1061.02" y1="561.30" x2="1059.42" y2="567.70" stroke="#b5cea8" stroke-width="1.7" stroke-linecap="round"/><rect x="1157.52" y="559.20" width="5.8" height="11.0" rx="2.90" ry="3.6" fill="none" stroke="#b5cea8" stroke-width="1.75"/><line x1="1161.32" y1="561.30" x2="1159.72" y2="567.70" stroke="#b5cea8" stroke-width="1.7" stroke-linecap="round"/><rect x="1186.36" y="565.00" width="8.7" height="2" fill="#cccccc"/><rect x="1197.64" y="559.20" width="5.8" height="11.0" rx="2.90" ry="3.6" fill="none" stroke="#b5cea8" stroke-width="1.75"/><line x1="1201.44" y1="561.30" x2="1199.84" y2="567.70" stroke="#b5cea8" stroke-width="1.7" stroke-linecap="round"/><rect x="1217.70" y="559.20" width="5.8" height="11.0" rx="2.90" ry="3.6" fill="none" stroke="#b5cea8" stroke-width="1.75"/><line x1="1221.50" y1="561.30" x2="1219.90" y2="567.70" stroke="#b5cea8" stroke-width="1.7" stroke-linecap="round"/><rect x="1227.73" y="559.20" width="5.8" height="11.0" rx="2.90" ry="3.6" fill="none" stroke="#b5cea8" stroke-width="1.75"/><line x1="1231.53" y1="561.30" x2="1229.93" y2="567.70" stroke="#b5cea8" stroke-width="1.7" stroke-linecap="round"/><rect x="1249.89" y="557.90" width="2" height="16.9" fill="#cccccc"/><rect x="16.20" y="582.90" width="2" height="16.9" fill="#cccccc"/><rect x="72.38" y="597.00" width="10.0" height="2" fill="#cccccc"/><rect x="152.62" y="597.00" width="10.0" height="2" fill="#cccccc"/><rect x="283.01" y="597.00" width="10.0" height="2" fill="#cccccc"/><rect x="597.94" y="582.90" width="2" height="16.9" fill="#cccccc"/><rect x="728.33" y="582.90" width="2" height="16.9" fill="#cccccc"/><rect x="928.93" y="582.90" width="2" height="16.9" fill="#cccccc"/><rect x="956.92" y="584.20" width="5.8" height="11.0" rx="2.90" ry="3.6" fill="none" stroke="#b5cea8" stroke-width="1.75"/><line x1="960.72" y1="586.30" x2="959.12" y2="592.70" stroke="#b5cea8" stroke-width="1.7" stroke-linecap="round"/><rect x="985.76" y="590.00" width="8.7" height="2" fill="#cccccc"/><rect x="997.04" y="584.20" width="5.8" height="11.0" rx="2.90" ry="3.6" fill="none" stroke="#b5cea8" stroke-width="1.75"/><line x1="1000.84" y1="586.30" x2="999.24" y2="592.70" stroke="#b5cea8" stroke-width="1.7" stroke-linecap="round"/><rect x="1015.85" y="590.00" width="8.7" height="2" fill="#cccccc"/><rect x="1097.34" y="584.20" width="5.8" height="11.0" rx="2.90" ry="3.6" fill="none" stroke="#b5cea8" stroke-width="1.75"/><line x1="1101.14" y1="586.30" x2="1099.54" y2="592.70" stroke="#b5cea8" stroke-width="1.7" stroke-linecap="round"/><rect x="1186.36" y="590.00" width="8.7" height="2" fill="#cccccc"/><rect x="1197.64" y="584.20" width="5.8" height="11.0" rx="2.90" ry="3.6" fill="none" stroke="#b5cea8" stroke-width="1.75"/><line x1="1201.44" y1="586.30" x2="1199.84" y2="592.70" stroke="#b5cea8" stroke-width="1.7" stroke-linecap="round"/><rect x="1217.70" y="584.20" width="5.8" height="11.0" rx="2.90" ry="3.6" fill="none" stroke="#b5cea8" stroke-width="1.75"/><line x1="1221.50" y1="586.30" x2="1219.90" y2="592.70" stroke="#b5cea8" stroke-width="1.7" stroke-linecap="round"/><rect x="1227.73" y="584.20" width="5.8" height="11.0" rx="2.90" ry="3.6" fill="none" stroke="#b5cea8" stroke-width="1.75"/><line x1="1231.53" y1="586.30" x2="1229.93" y2="592.70" stroke="#b5cea8" stroke-width="1.7" stroke-linecap="round"/><rect x="1249.89" y="582.90" width="2" height="16.9" fill="#cccccc"/><rect x="16.20" y="607.90" width="2" height="16.9" fill="#cccccc"/><rect x="72.38" y="622.00" width="10.0" height="2" fill="#cccccc"/><rect x="152.62" y="622.00" width="10.0" height="2" fill="#cccccc"/><rect x="283.01" y="622.00" width="10.0" height="2" fill="#cccccc"/><rect x="597.94" y="607.90" width="2" height="16.9" fill="#cccccc"/><rect x="728.33" y="607.90" width="2" height="16.9" fill="#cccccc"/><rect x="928.93" y="607.90" width="2" height="16.9" fill="#cccccc"/><rect x="956.92" y="609.20" width="5.8" height="11.0" rx="2.90" ry="3.6" fill="none" stroke="#b5cea8" stroke-width="1.75"/><line x1="960.72" y1="611.30" x2="959.12" y2="617.70" stroke="#b5cea8" stroke-width="1.7" stroke-linecap="round"/><rect x="985.76" y="615.00" width="8.7" height="2" fill="#cccccc"/><rect x="997.04" y="609.20" width="5.8" height="11.0" rx="2.90" ry="3.6" fill="none" stroke="#b5cea8" stroke-width="1.75"/><line x1="1000.84" y1="611.30" x2="999.24" y2="617.70" stroke="#b5cea8" stroke-width="1.7" stroke-linecap="round"/><rect x="1015.85" y="615.00" width="8.7" height="2" fill="#cccccc"/><rect x="1057.22" y="609.20" width="5.8" height="11.0" rx="2.90" ry="3.6" fill="none" stroke="#b5cea8" stroke-width="1.75"/><line x1="1061.02" y1="611.30" x2="1059.42" y2="617.70" stroke="#b5cea8" stroke-width="1.7" stroke-linecap="round"/><rect x="1067.25" y="609.20" width="5.8" height="11.0" rx="2.90" ry="3.6" fill="none" stroke="#b5cea8" stroke-width="1.75"/><line x1="1071.05" y1="611.30" x2="1069.45" y2="617.70" stroke="#b5cea8" stroke-width="1.7" stroke-linecap="round"/><rect x="1127.43" y="609.20" width="5.8" height="11.0" rx="2.90" ry="3.6" fill="none" stroke="#b5cea8" stroke-width="1.75"/><line x1="1131.23" y1="611.30" x2="1129.63" y2="617.70" stroke="#b5cea8" stroke-width="1.7" stroke-linecap="round"/><rect x="1186.36" y="615.00" width="8.7" height="2" fill="#cccccc"/><rect x="1197.64" y="609.20" width="5.8" height="11.0" rx="2.90" ry="3.6" fill="none" stroke="#b5cea8" stroke-width="1.75"/><line x1="1201.44" y1="611.30" x2="1199.84" y2="617.70" stroke="#b5cea8" stroke-width="1.7" stroke-linecap="round"/><rect x="1217.70" y="609.20" width="5.8" height="11.0" rx="2.90" ry="3.6" fill="none" stroke="#b5cea8" stroke-width="1.75"/><line x1="1221.50" y1="611.30" x2="1219.90" y2="617.70" stroke="#b5cea8" stroke-width="1.7" stroke-linecap="round"/><rect x="1227.73" y="609.20" width="5.8" height="11.0" rx="2.90" ry="3.6" fill="none" stroke="#b5cea8" stroke-width="1.75"/><line x1="1231.53" y1="611.30" x2="1229.93" y2="617.70" stroke="#b5cea8" stroke-width="1.7" stroke-linecap="round"/><rect x="1249.89" y="607.90" width="2" height="16.9" fill="#cccccc"/><rect x="16.20" y="632.90" width="2" height="16.9" fill="#cccccc"/><rect x="72.38" y="647.00" width="10.0" height="2" fill="#cccccc"/><rect x="152.62" y="647.00" width="10.0" height="2" fill="#cccccc"/><rect x="283.01" y="647.00" width="10.0" height="2" fill="#cccccc"/><rect x="343.19" y="647.00" width="10.0" height="2" fill="#cccccc"/><rect x="597.94" y="632.90" width="2" height="16.9" fill="#cccccc"/><rect x="728.33" y="632.90" width="2" height="16.9" fill="#cccccc"/><rect x="928.93" y="632.90" width="2" height="16.9" fill="#cccccc"/><rect x="956.92" y="634.20" width="5.8" height="11.0" rx="2.90" ry="3.6" fill="none" stroke="#b5cea8" stroke-width="1.75"/><line x1="960.72" y1="636.30" x2="959.12" y2="642.70" stroke="#b5cea8" stroke-width="1.7" stroke-linecap="round"/><rect x="985.76" y="640.00" width="8.7" height="2" fill="#cccccc"/><rect x="997.04" y="634.20" width="5.8" height="11.0" rx="2.90" ry="3.6" fill="none" stroke="#b5cea8" stroke-width="1.75"/><line x1="1000.84" y1="636.30" x2="999.24" y2="642.70" stroke="#b5cea8" stroke-width="1.7" stroke-linecap="round"/><rect x="1015.85" y="640.00" width="8.7" height="2" fill="#cccccc"/><rect x="1057.22" y="634.20" width="5.8" height="11.0" rx="2.90" ry="3.6" fill="none" stroke="#b5cea8" stroke-width="1.75"/><line x1="1061.02" y1="636.30" x2="1059.42" y2="642.70" stroke="#b5cea8" stroke-width="1.7" stroke-linecap="round"/><rect x="1067.25" y="634.20" width="5.8" height="11.0" rx="2.90" ry="3.6" fill="none" stroke="#b5cea8" stroke-width="1.75"/><line x1="1071.05" y1="636.30" x2="1069.45" y2="642.70" stroke="#b5cea8" stroke-width="1.7" stroke-linecap="round"/><rect x="1186.36" y="640.00" width="8.7" height="2" fill="#cccccc"/><rect x="1197.64" y="634.20" width="5.8" height="11.0" rx="2.90" ry="3.6" fill="none" stroke="#b5cea8" stroke-width="1.75"/><line x1="1201.44" y1="636.30" x2="1199.84" y2="642.70" stroke="#b5cea8" stroke-width="1.7" stroke-linecap="round"/><rect x="1217.70" y="634.20" width="5.8" height="11.0" rx="2.90" ry="3.6" fill="none" stroke="#b5cea8" stroke-width="1.75"/><line x1="1221.50" y1="636.30" x2="1219.90" y2="642.70" stroke="#b5cea8" stroke-width="1.7" stroke-linecap="round"/><rect x="1227.73" y="634.20" width="5.8" height="11.0" rx="2.90" ry="3.6" fill="none" stroke="#b5cea8" stroke-width="1.75"/><line x1="1231.53" y1="636.30" x2="1229.93" y2="642.70" stroke="#b5cea8" stroke-width="1.7" stroke-linecap="round"/><rect x="1249.89" y="632.90" width="2" height="16.9" fill="#cccccc"/><rect x="16.20" y="657.90" width="2" height="16.9" fill="#cccccc"/><rect x="72.38" y="672.00" width="10.0" height="2" fill="#cccccc"/><rect x="152.62" y="672.00" width="10.0" height="2" fill="#cccccc"/><rect x="283.01" y="672.00" width="10.0" height="2" fill="#cccccc"/><rect x="343.19" y="672.00" width="10.0" height="2" fill="#cccccc"/><rect x="423.43" y="672.00" width="10.0" height="2" fill="#cccccc"/><rect x="597.94" y="657.90" width="2" height="16.9" fill="#cccccc"/><rect x="728.33" y="657.90" width="2" height="16.9" fill="#cccccc"/><rect x="928.93" y="657.90" width="2" height="16.9" fill="#cccccc"/><rect x="956.92" y="659.20" width="5.8" height="11.0" rx="2.90" ry="3.6" fill="none" stroke="#b5cea8" stroke-width="1.75"/><line x1="960.72" y1="661.30" x2="959.12" y2="667.70" stroke="#b5cea8" stroke-width="1.7" stroke-linecap="round"/><rect x="985.76" y="665.00" width="8.7" height="2" fill="#cccccc"/><rect x="997.04" y="659.20" width="5.8" height="11.0" rx="2.90" ry="3.6" fill="none" stroke="#b5cea8" stroke-width="1.75"/><line x1="1000.84" y1="661.30" x2="999.24" y2="667.70" stroke="#b5cea8" stroke-width="1.7" stroke-linecap="round"/><rect x="1015.85" y="665.00" width="8.7" height="2" fill="#cccccc"/><rect x="1057.22" y="659.20" width="5.8" height="11.0" rx="2.90" ry="3.6" fill="none" stroke="#b5cea8" stroke-width="1.75"/><line x1="1061.02" y1="661.30" x2="1059.42" y2="667.70" stroke="#b5cea8" stroke-width="1.7" stroke-linecap="round"/><rect x="1186.36" y="665.00" width="8.7" height="2" fill="#cccccc"/><rect x="1197.64" y="659.20" width="5.8" height="11.0" rx="2.90" ry="3.6" fill="none" stroke="#b5cea8" stroke-width="1.75"/><line x1="1201.44" y1="661.30" x2="1199.84" y2="667.70" stroke="#b5cea8" stroke-width="1.7" stroke-linecap="round"/><rect x="1217.70" y="659.20" width="5.8" height="11.0" rx="2.90" ry="3.6" fill="none" stroke="#b5cea8" stroke-width="1.75"/><line x1="1221.50" y1="661.30" x2="1219.90" y2="667.70" stroke="#b5cea8" stroke-width="1.7" stroke-linecap="round"/><rect x="1227.73" y="659.20" width="5.8" height="11.0" rx="2.90" ry="3.6" fill="none" stroke="#b5cea8" stroke-width="1.75"/><line x1="1231.53" y1="661.30" x2="1229.93" y2="667.70" stroke="#b5cea8" stroke-width="1.7" stroke-linecap="round"/><rect x="1249.89" y="657.90" width="2" height="16.9" fill="#cccccc"/><rect x="16.20" y="682.90" width="2" height="16.9" fill="#cccccc"/><rect x="72.38" y="697.00" width="10.0" height="2" fill="#cccccc"/><rect x="152.62" y="697.00" width="10.0" height="2" fill="#cccccc"/><rect x="272.98" y="697.00" width="10.0" height="2" fill="#cccccc"/><rect x="333.16" y="697.00" width="10.0" height="2" fill="#cccccc"/><rect x="597.94" y="682.90" width="2" height="16.9" fill="#cccccc"/><rect x="728.33" y="682.90" width="2" height="16.9" fill="#cccccc"/><rect x="928.93" y="682.90" width="2" height="16.9" fill="#cccccc"/><rect x="956.92" y="684.20" width="5.8" height="11.0" rx="2.90" ry="3.6" fill="none" stroke="#b5cea8" stroke-width="1.75"/><line x1="960.72" y1="686.30" x2="959.12" y2="692.70" stroke="#b5cea8" stroke-width="1.7" stroke-linecap="round"/><rect x="985.76" y="690.00" width="8.7" height="2" fill="#cccccc"/><rect x="997.04" y="684.20" width="5.8" height="11.0" rx="2.90" ry="3.6" fill="none" stroke="#b5cea8" stroke-width="1.75"/><line x1="1000.84" y1="686.30" x2="999.24" y2="692.70" stroke="#b5cea8" stroke-width="1.7" stroke-linecap="round"/><rect x="1015.85" y="690.00" width="8.7" height="2" fill="#cccccc"/><rect x="1167.55" y="684.20" width="5.8" height="11.0" rx="2.90" ry="3.6" fill="none" stroke="#b5cea8" stroke-width="1.75"/><line x1="1171.35" y1="686.30" x2="1169.75" y2="692.70" stroke="#b5cea8" stroke-width="1.7" stroke-linecap="round"/><rect x="1186.36" y="690.00" width="8.7" height="2" fill="#cccccc"/><rect x="1197.64" y="684.20" width="5.8" height="11.0" rx="2.90" ry="3.6" fill="none" stroke="#b5cea8" stroke-width="1.75"/><line x1="1201.44" y1="686.30" x2="1199.84" y2="692.70" stroke="#b5cea8" stroke-width="1.7" stroke-linecap="round"/><rect x="1217.70" y="684.20" width="5.8" height="11.0" rx="2.90" ry="3.6" fill="none" stroke="#b5cea8" stroke-width="1.75"/><line x1="1221.50" y1="686.30" x2="1219.90" y2="692.70" stroke="#b5cea8" stroke-width="1.7" stroke-linecap="round"/><rect x="1227.73" y="684.20" width="5.8" height="11.0" rx="2.90" ry="3.6" fill="none" stroke="#b5cea8" stroke-width="1.75"/><line x1="1231.53" y1="686.30" x2="1229.93" y2="692.70" stroke="#b5cea8" stroke-width="1.7" stroke-linecap="round"/><rect x="1249.89" y="682.90" width="2" height="16.9" fill="#cccccc"/><rect x="16.20" y="707.90" width="2" height="16.9" fill="#cccccc"/><rect x="72.38" y="722.00" width="10.0" height="2" fill="#cccccc"/><rect x="152.62" y="722.00" width="10.0" height="2" fill="#cccccc"/><rect x="597.94" y="707.90" width="2" height="16.9" fill="#cccccc"/><rect x="728.33" y="707.90" width="2" height="16.9" fill="#cccccc"/><rect x="928.93" y="707.90" width="2" height="16.9" fill="#cccccc"/><rect x="956.92" y="709.20" width="5.8" height="11.0" rx="2.90" ry="3.6" fill="none" stroke="#b5cea8" stroke-width="1.75"/><line x1="960.72" y1="711.30" x2="959.12" y2="717.70" stroke="#b5cea8" stroke-width="1.7" stroke-linecap="round"/><rect x="985.76" y="715.00" width="8.7" height="2" fill="#cccccc"/><rect x="997.04" y="709.20" width="5.8" height="11.0" rx="2.90" ry="3.6" fill="none" stroke="#b5cea8" stroke-width="1.75"/><line x1="1000.84" y1="711.30" x2="999.24" y2="717.70" stroke="#b5cea8" stroke-width="1.7" stroke-linecap="round"/><rect x="1015.85" y="715.00" width="8.7" height="2" fill="#cccccc"/><rect x="1057.22" y="709.20" width="5.8" height="11.0" rx="2.90" ry="3.6" fill="none" stroke="#b5cea8" stroke-width="1.75"/><line x1="1061.02" y1="711.30" x2="1059.42" y2="717.70" stroke="#b5cea8" stroke-width="1.7" stroke-linecap="round"/><rect x="1067.25" y="709.20" width="5.8" height="11.0" rx="2.90" ry="3.6" fill="none" stroke="#b5cea8" stroke-width="1.75"/><line x1="1071.05" y1="711.30" x2="1069.45" y2="717.70" stroke="#b5cea8" stroke-width="1.7" stroke-linecap="round"/><rect x="1097.34" y="709.20" width="5.8" height="11.0" rx="2.90" ry="3.6" fill="none" stroke="#b5cea8" stroke-width="1.75"/><line x1="1101.14" y1="711.30" x2="1099.54" y2="717.70" stroke="#b5cea8" stroke-width="1.7" stroke-linecap="round"/><rect x="1147.49" y="709.20" width="5.8" height="11.0" rx="2.90" ry="3.6" fill="none" stroke="#b5cea8" stroke-width="1.75"/><line x1="1151.29" y1="711.30" x2="1149.69" y2="717.70" stroke="#b5cea8" stroke-width="1.7" stroke-linecap="round"/><rect x="1186.36" y="715.00" width="8.7" height="2" fill="#cccccc"/><rect x="1197.64" y="709.20" width="5.8" height="11.0" rx="2.90" ry="3.6" fill="none" stroke="#b5cea8" stroke-width="1.75"/><line x1="1201.44" y1="711.30" x2="1199.84" y2="717.70" stroke="#b5cea8" stroke-width="1.7" stroke-linecap="round"/><rect x="1217.70" y="709.20" width="5.8" height="11.0" rx="2.90" ry="3.6" fill="none" stroke="#b5cea8" stroke-width="1.75"/><line x1="1221.50" y1="711.30" x2="1219.90" y2="717.70" stroke="#b5cea8" stroke-width="1.7" stroke-linecap="round"/><rect x="1227.73" y="709.20" width="5.8" height="11.0" rx="2.90" ry="3.6" fill="none" stroke="#b5cea8" stroke-width="1.75"/><line x1="1231.53" y1="711.30" x2="1229.93" y2="717.70" stroke="#b5cea8" stroke-width="1.7" stroke-linecap="round"/><rect x="1249.89" y="707.90" width="2" height="16.9" fill="#cccccc"/><rect x="16.20" y="732.90" width="2" height="16.9" fill="#cccccc"/><rect x="72.38" y="747.00" width="10.0" height="2" fill="#cccccc"/><rect x="142.59" y="747.00" width="10.0" height="2" fill="#cccccc"/><rect x="252.92" y="747.00" width="10.0" height="2" fill="#cccccc"/><rect x="323.13" y="747.00" width="10.0" height="2" fill="#cccccc"/><rect x="597.94" y="732.90" width="2" height="16.9" fill="#cccccc"/><rect x="728.33" y="732.90" width="2" height="16.9" fill="#cccccc"/><rect x="928.93" y="732.90" width="2" height="16.9" fill="#cccccc"/><rect x="956.92" y="734.20" width="5.8" height="11.0" rx="2.90" ry="3.6" fill="none" stroke="#b5cea8" stroke-width="1.75"/><line x1="960.72" y1="736.30" x2="959.12" y2="742.70" stroke="#b5cea8" stroke-width="1.7" stroke-linecap="round"/><rect x="985.76" y="740.00" width="8.7" height="2" fill="#cccccc"/><rect x="997.04" y="734.20" width="5.8" height="11.0" rx="2.90" ry="3.6" fill="none" stroke="#b5cea8" stroke-width="1.75"/><line x1="1000.84" y1="736.30" x2="999.24" y2="742.70" stroke="#b5cea8" stroke-width="1.7" stroke-linecap="round"/><rect x="1015.85" y="740.00" width="8.7" height="2" fill="#cccccc"/><rect x="1186.36" y="740.00" width="8.7" height="2" fill="#cccccc"/><rect x="1197.64" y="734.20" width="5.8" height="11.0" rx="2.90" ry="3.6" fill="none" stroke="#b5cea8" stroke-width="1.75"/><line x1="1201.44" y1="736.30" x2="1199.84" y2="742.70" stroke="#b5cea8" stroke-width="1.7" stroke-linecap="round"/><rect x="1217.70" y="734.20" width="5.8" height="11.0" rx="2.90" ry="3.6" fill="none" stroke="#b5cea8" stroke-width="1.75"/><line x1="1221.50" y1="736.30" x2="1219.90" y2="742.70" stroke="#b5cea8" stroke-width="1.7" stroke-linecap="round"/><rect x="1227.73" y="734.20" width="5.8" height="11.0" rx="2.90" ry="3.6" fill="none" stroke="#b5cea8" stroke-width="1.75"/><line x1="1231.53" y1="736.30" x2="1229.93" y2="742.70" stroke="#b5cea8" stroke-width="1.7" stroke-linecap="round"/><rect x="1249.89" y="732.90" width="2" height="16.9" fill="#cccccc"/><rect x="12.50" y="764.85" width="9.4" height="2" fill="#cccccc"/><rect x="16.20" y="761.65" width="2" height="8.4" fill="#cccccc"/><rect x="22.83" y="764.85" width="8.8" height="2" fill="#6a9955"/><rect x="32.86" y="764.85" width="8.8" height="2" fill="#6a9955"/><rect x="42.89" y="764.85" width="8.8" height="2" fill="#6a9955"/><rect x="52.92" y="764.85" width="8.8" height="2" fill="#6a9955"/><rect x="62.95" y="764.85" width="8.8" height="2" fill="#6a9955"/><rect x="72.98" y="764.85" width="8.8" height="2" fill="#6a9955"/><rect x="83.01" y="764.85" width="8.8" height="2" fill="#6a9955"/><rect x="93.04" y="764.85" width="8.8" height="2" fill="#6a9955"/><rect x="103.07" y="764.85" width="8.8" height="2" fill="#6a9955"/><rect x="113.10" y="764.85" width="8.8" height="2" fill="#6a9955"/><rect x="123.13" y="764.85" width="8.8" height="2" fill="#6a9955"/><rect x="133.16" y="764.85" width="8.8" height="2" fill="#6a9955"/><rect x="143.19" y="764.85" width="8.8" height="2" fill="#6a9955"/><rect x="153.22" y="764.85" width="8.8" height="2" fill="#6a9955"/><rect x="163.25" y="764.85" width="8.8" height="2" fill="#6a9955"/><rect x="173.28" y="764.85" width="8.8" height="2" fill="#6a9955"/><rect x="183.31" y="764.85" width="8.8" height="2" fill="#6a9955"/><rect x="193.34" y="764.85" width="8.8" height="2" fill="#6a9955"/><rect x="203.37" y="764.85" width="8.8" height="2" fill="#6a9955"/><rect x="213.40" y="764.85" width="8.8" height="2" fill="#6a9955"/><rect x="223.43" y="764.85" width="8.8" height="2" fill="#6a9955"/><rect x="233.46" y="764.85" width="8.8" height="2" fill="#6a9955"/><rect x="243.49" y="764.85" width="8.8" height="2" fill="#6a9955"/><rect x="253.52" y="764.85" width="8.8" height="2" fill="#6a9955"/><rect x="263.55" y="764.85" width="8.8" height="2" fill="#6a9955"/><rect x="273.58" y="764.85" width="8.8" height="2" fill="#6a9955"/><rect x="283.61" y="764.85" width="8.8" height="2" fill="#6a9955"/><rect x="293.64" y="764.85" width="8.8" height="2" fill="#6a9955"/><rect x="303.67" y="764.85" width="8.8" height="2" fill="#6a9955"/><rect x="313.70" y="764.85" width="8.8" height="2" fill="#6a9955"/><rect x="323.73" y="764.85" width="8.8" height="2" fill="#6a9955"/><rect x="333.76" y="764.85" width="8.8" height="2" fill="#6a9955"/><rect x="343.79" y="764.85" width="8.8" height="2" fill="#6a9955"/><rect x="353.82" y="764.85" width="8.8" height="2" fill="#6a9955"/><rect x="363.85" y="764.85" width="8.8" height="2" fill="#6a9955"/><rect x="373.88" y="764.85" width="8.8" height="2" fill="#6a9955"/><rect x="383.91" y="764.85" width="8.8" height="2" fill="#6a9955"/><rect x="393.94" y="764.85" width="8.8" height="2" fill="#6a9955"/><rect x="403.97" y="764.85" width="8.8" height="2" fill="#6a9955"/><rect x="414.00" y="764.85" width="8.8" height="2" fill="#6a9955"/><rect x="424.03" y="764.85" width="8.8" height="2" fill="#6a9955"/><rect x="434.06" y="764.85" width="8.8" height="2" fill="#6a9955"/><rect x="444.09" y="764.85" width="8.8" height="2" fill="#6a9955"/><rect x="454.12" y="764.85" width="8.8" height="2" fill="#6a9955"/><rect x="464.15" y="764.85" width="8.8" height="2" fill="#6a9955"/><rect x="474.18" y="764.85" width="8.8" height="2" fill="#6a9955"/><rect x="484.21" y="764.85" width="8.8" height="2" fill="#6a9955"/><rect x="494.24" y="764.85" width="8.8" height="2" fill="#6a9955"/><rect x="504.27" y="764.85" width="8.8" height="2" fill="#6a9955"/><rect x="514.30" y="764.85" width="8.8" height="2" fill="#6a9955"/><rect x="524.33" y="764.85" width="8.8" height="2" fill="#6a9955"/><rect x="534.36" y="764.85" width="8.8" height="2" fill="#6a9955"/><rect x="544.39" y="764.85" width="8.8" height="2" fill="#6a9955"/><rect x="554.42" y="764.85" width="8.8" height="2" fill="#6a9955"/><rect x="564.45" y="764.85" width="8.8" height="2" fill="#6a9955"/><rect x="574.48" y="764.85" width="8.8" height="2" fill="#6a9955"/><rect x="584.51" y="764.85" width="8.8" height="2" fill="#6a9955"/><rect x="594.24" y="764.85" width="9.4" height="2" fill="#6a9955"/><rect x="597.94" y="761.65" width="2" height="8.4" fill="#6a9955"/><rect x="604.57" y="764.85" width="8.8" height="2" fill="#6a9955"/><rect x="614.60" y="764.85" width="8.8" height="2" fill="#6a9955"/><rect x="624.63" y="764.85" width="8.8" height="2" fill="#6a9955"/><rect x="634.66" y="764.85" width="8.8" height="2" fill="#6a9955"/><rect x="644.69" y="764.85" width="8.8" height="2" fill="#6a9955"/><rect x="654.72" y="764.85" width="8.8" height="2" fill="#6a9955"/><rect x="664.75" y="764.85" width="8.8" height="2" fill="#6a9955"/><rect x="674.78" y="764.85" width="8.8" height="2" fill="#6a9955"/><rect x="684.81" y="764.85" width="8.8" height="2" fill="#6a9955"/><rect x="694.84" y="764.85" width="8.8" height="2" fill="#6a9955"/><rect x="704.87" y="764.85" width="8.8" height="2" fill="#6a9955"/><rect x="714.90" y="764.85" width="8.8" height="2" fill="#6a9955"/><rect x="724.63" y="764.85" width="9.4" height="2" fill="#6a9955"/><rect x="728.33" y="761.65" width="2" height="8.4" fill="#6a9955"/><rect x="734.96" y="764.85" width="8.8" height="2" fill="#6a9955"/><rect x="744.99" y="764.85" width="8.8" height="2" fill="#6a9955"/><rect x="755.02" y="764.85" width="8.8" height="2" fill="#6a9955"/><rect x="765.05" y="764.85" width="8.8" height="2" fill="#6a9955"/><rect x="775.08" y="764.85" width="8.8" height="2" fill="#6a9955"/><rect x="785.11" y="764.85" width="8.8" height="2" fill="#6a9955"/><rect x="795.14" y="764.85" width="8.8" height="2" fill="#6a9955"/><rect x="805.17" y="764.85" width="8.8" height="2" fill="#6a9955"/><rect x="815.20" y="764.85" width="8.8" height="2" fill="#6a9955"/><rect x="825.23" y="764.85" width="8.8" height="2" fill="#6a9955"/><rect x="835.26" y="764.85" width="8.8" height="2" fill="#6a9955"/><rect x="845.29" y="764.85" width="8.8" height="2" fill="#6a9955"/><rect x="855.32" y="764.85" width="8.8" height="2" fill="#6a9955"/><rect x="865.35" y="764.85" width="8.8" height="2" fill="#6a9955"/><rect x="875.38" y="764.85" width="8.8" height="2" fill="#6a9955"/><rect x="885.41" y="764.85" width="8.8" height="2" fill="#6a9955"/><rect x="895.44" y="764.85" width="8.8" height="2" fill="#6a9955"/><rect x="905.47" y="764.85" width="8.8" height="2" fill="#6a9955"/><rect x="915.50" y="764.85" width="8.8" height="2" fill="#6a9955"/><rect x="925.23" y="764.85" width="9.4" height="2" fill="#6a9955"/><rect x="928.93" y="761.65" width="2" height="8.4" fill="#6a9955"/><rect x="935.56" y="764.85" width="8.8" height="2" fill="#6a9955"/><rect x="945.59" y="764.85" width="8.8" height="2" fill="#6a9955"/><rect x="955.62" y="764.85" width="8.8" height="2" fill="#6a9955"/><rect x="965.65" y="764.85" width="8.8" height="2" fill="#6a9955"/><rect x="975.68" y="764.85" width="8.8" height="2" fill="#6a9955"/><rect x="985.71" y="764.85" width="8.8" height="2" fill="#6a9955"/><rect x="995.74" y="764.85" width="8.8" height="2" fill="#6a9955"/><rect x="1005.77" y="764.85" width="8.8" height="2" fill="#6a9955"/><rect x="1015.80" y="764.85" width="8.8" height="2" fill="#6a9955"/><rect x="1025.83" y="764.85" width="8.8" height="2" fill="#6a9955"/><rect x="1035.86" y="764.85" width="8.8" height="2" fill="#6a9955"/><rect x="1045.89" y="764.85" width="8.8" height="2" fill="#6a9955"/><rect x="1055.92" y="764.85" width="8.8" height="2" fill="#6a9955"/><rect x="1065.95" y="764.85" width="8.8" height="2" fill="#6a9955"/><rect x="1075.98" y="764.85" width="8.8" height="2" fill="#6a9955"/><rect x="1086.01" y="764.85" width="8.8" height="2" fill="#6a9955"/><rect x="1096.04" y="764.85" width="8.8" height="2" fill="#6a9955"/><rect x="1106.07" y="764.85" width="8.8" height="2" fill="#6a9955"/><rect x="1116.10" y="764.85" width="8.8" height="2" fill="#6a9955"/><rect x="1126.13" y="764.85" width="8.8" height="2" fill="#6a9955"/><rect x="1136.16" y="764.85" width="8.8" height="2" fill="#6a9955"/><rect x="1146.19" y="764.85" width="8.8" height="2" fill="#6a9955"/><rect x="1156.22" y="764.85" width="8.8" height="2" fill="#6a9955"/><rect x="1166.25" y="764.85" width="8.8" height="2" fill="#6a9955"/><rect x="1176.28" y="764.85" width="8.8" height="2" fill="#6a9955"/><rect x="1186.31" y="764.85" width="8.8" height="2" fill="#6a9955"/><rect x="1196.34" y="764.85" width="8.8" height="2" fill="#6a9955"/><rect x="1206.37" y="764.85" width="8.8" height="2" fill="#6a9955"/><rect x="1216.40" y="764.85" width="8.8" height="2" fill="#6a9955"/><rect x="1226.43" y="764.85" width="8.8" height="2" fill="#6a9955"/><rect x="1236.46" y="764.85" width="8.8" height="2" fill="#6a9955"/><rect x="1246.19" y="764.85" width="9.4" height="2" fill="#6a9955"/><rect x="1249.89" y="761.65" width="2" height="8.4" fill="#6a9955"/></svg>
<div class="l" style="top:3.50px"><span class="tx"> </span><span class="kw">SELECT</span></div><div class="l" style="top:28.50px"><span class="tx">     </span><span class="kw">value</span><span class="tx">:</span><span class="st">&quot;objectName&quot;</span><span class="tx">::STRING </span><span class="kw">AS</span><span class="tx"> object name,</span></div><div class="l" style="top:53.50px"><span class="tx">     </span><span class="kw">CASE</span></div><div class="l" style="top:78.50px"><span class="tx">         </span><span class="kw">WHEN</span><span class="tx"> object modified by ddl </span><span class="kw">IS NOT NULL THEN</span><span class="tx"> </span><span class="st">&#x27;write&#x27;</span></div><div class="l" style="top:103.50px"><span class="tx">         </span><span class="kw">ELSE</span><span class="tx"> </span><span class="st">&#x27;read&#x27;</span></div><div class="l" style="top:128.50px"><span class="tx">     </span><span class="kw">END AS</span><span class="tx"> query type,</span></div><div class="l" style="top:153.50px"><span class="tx">     </span><span class="fn">COUNT</span><span class="br">(</span><span class="kw">DISTINCT</span><span class="tx"> query id</span><span class="br">)</span><span class="tx"> </span><span class="kw">AS</span><span class="tx"> number of queries,</span></div><div class="l" style="top:178.50px"><span class="tx">     </span><span class="fn">MAX</span><span class="br">(</span><span class="tx">query start time</span><span class="br">)</span><span class="tx"> </span><span class="kw">AS</span><span class="tx"> last query start time</span></div><div class="l" style="top:203.50px"><span class="tx"> </span><span class="kw">FROM</span><span class="tx"> snowflake.account usage.access history,</span></div><div class="l" style="top:228.50px"><span class="tx"> LATERAL FLATTEN </span><span class="br">(</span><span class="tx">input =&gt; direct objects accessed</span><span class="br">)</span></div><div class="l" style="top:253.50px"><span class="tx"> </span><span class="kw">WHERE</span><span class="tx"> object name ILIKE </span><span class="st">&#x27;HRZN%&#x27;</span></div><div class="l" style="top:278.50px"><span class="tx"> </span><span class="kw">GROUP BY</span><span class="tx"> object name, query type</span></div><div class="l" style="top:303.50px"><span class="tx"> </span><span class="kw">ORDER BY</span><span class="tx"> object name, number of queries </span><span class="kw">DESC</span><span class="tx">;</span></div><div class="l" style="top:353.50px"><span class="tx">  OBJECT NAME                                               QUERY TYPE   NUMBER OF QUERIES   LAST QUERY START TIME          </span></div><div class="l" style="top:403.50px"><span class="tx">  HRZN DB.HRZN SCH.</span><span class="st">&quot;7ede1788 521a 498b 9be  9a95  d74d21&quot;</span><span class="tx">   </span><span class="kw">read</span><span class="tx">                       </span><span class="nm">584</span><span class="tx">   </span><span class="nm">2 25</span><span class="tx"> </span><span class="nm"> 4</span><span class="tx"> </span><span class="nm">23</span><span class="tx"> </span><span class="nm"> 1</span><span class="tx">:</span><span class="nm">1 </span><span class="tx">:</span><span class="nm"> 2</span><span class="tx">.</span><span class="nm">267</span><span class="tx">  </span><span class="nm"> 7  </span><span class="tx">  </span></div><div class="l" style="top:428.50px"><span class="tx">  HRZN DB.HRZN SCH.CUSTOMER</span><span class="tx">                                 </span><span class="kw">read</span><span class="tx">                      </span><span class="nm">1  6</span><span class="tx">   </span><span class="nm">2 25</span><span class="tx"> </span><span class="nm"> 4</span><span class="tx"> </span><span class="nm">23</span><span class="tx"> </span><span class="nm">17</span><span class="tx">:</span><span class="nm">57</span><span class="tx">:</span><span class="nm">43</span><span class="tx">.</span><span class="nm">1 8</span><span class="tx">  </span><span class="nm"> 7  </span><span class="tx">  </span></div><div class="l" style="top:453.50px"><span class="tx">  HRZN DB.HRZN SCH.CUSTOMER</span><span class="tx">                                 </span><span class="tx">write</span><span class="tx">                        </span><span class="nm">9</span><span class="tx">   </span><span class="nm">2 25</span><span class="tx"> </span><span class="nm"> 4</span><span class="tx"> </span><span class="nm">22</span><span class="tx"> </span><span class="nm">  </span><span class="tx">:</span><span class="nm">4 </span><span class="tx">:</span><span class="nm">22</span><span class="tx">.</span><span class="nm">362</span><span class="tx">  </span><span class="nm"> 7  </span><span class="tx">  </span></div><div class="l" style="top:478.50px"><span class="tx">  HRZN DB.HRZN SCH.CUSTOMER AR</span><span class="tx">                              </span><span class="kw">read</span><span class="tx">                         </span><span class="nm">3</span><span class="tx">   </span><span class="nm">2 25</span><span class="tx"> </span><span class="nm"> 4</span><span class="tx"> </span><span class="nm">23</span><span class="tx"> </span><span class="nm"> 3</span><span class="tx">:</span><span class="nm">31</span><span class="tx">:</span><span class="nm">52</span><span class="tx">.</span><span class="nm">773</span><span class="tx">  </span><span class="nm"> 7  </span><span class="tx">  </span></div><div class="l" style="top:503.50px"><span class="tx">  HRZN DB.HRZN SCH.CUSTOMER DC</span><span class="tx">                              </span><span class="kw">read</span><span class="tx">                         </span><span class="nm">2</span><span class="tx">   </span><span class="nm">2 25</span><span class="tx"> </span><span class="nm"> 4</span><span class="tx"> </span><span class="nm">23</span><span class="tx"> </span><span class="nm"> 3</span><span class="tx">:</span><span class="nm">31</span><span class="tx">:</span><span class="nm">52</span><span class="tx">.</span><span class="nm">653</span><span class="tx">  </span><span class="nm"> 7  </span><span class="tx">  </span></div><div class="l" style="top:528.50px"><span class="tx">  HRZN DB.HRZN SCH.CUSTOMER NY</span><span class="tx">                              </span><span class="tx">write</span><span class="tx">                        </span><span class="nm">2</span><span class="tx">   </span><span class="nm">2 25</span><span class="tx"> </span><span class="nm"> 4</span><span class="tx"> </span><span class="nm">22</span><span class="tx"> </span><span class="nm">  </span><span class="tx">:</span><span class="nm">25</span><span class="tx">:</span><span class="nm">11</span><span class="tx">.</span><span class="nm">174</span><span class="tx">  </span><span class="nm"> 7  </span><span class="tx">  </span></div><div class="l" style="top:553.50px"><span class="tx">  HRZN DB.HRZN SCH.CUSTOMER NY</span><span class="tx">                              </span><span class="kw">read</span><span class="tx">                         </span><span class="nm">2</span><span class="tx">   </span><span class="nm">2 25</span><span class="tx"> </span><span class="nm"> 4</span><span class="tx"> </span><span class="nm">23</span><span class="tx"> </span><span class="nm"> 3</span><span class="tx">:</span><span class="nm">31</span><span class="tx">:</span><span class="nm">52</span><span class="tx">.</span><span class="nm">8 5</span><span class="tx">  </span><span class="nm"> 7  </span><span class="tx">  </span></div><div class="l" style="top:578.50px"><span class="tx">  HRZN DB.HRZN SCH.CUSTOMER ORDERS</span><span class="tx">                          </span><span class="kw">read</span><span class="tx">                        </span><span class="nm">35</span><span class="tx">   </span><span class="nm">2 25</span><span class="tx"> </span><span class="nm"> 4</span><span class="tx"> </span><span class="nm">23</span><span class="tx"> </span><span class="nm">17</span><span class="tx">:</span><span class="nm">2 </span><span class="tx">:</span><span class="nm">36</span><span class="tx">.</span><span class="nm">632</span><span class="tx">  </span><span class="nm"> 7  </span><span class="tx">  </span></div><div class="l" style="top:603.50px"><span class="tx">  HRZN DB.HRZN SCH.CUSTOMER ORDERS</span><span class="tx">                          </span><span class="tx">write</span><span class="tx">                        </span><span class="nm">2</span><span class="tx">   </span><span class="nm">2 25</span><span class="tx"> </span><span class="nm"> 4</span><span class="tx"> </span><span class="nm">22</span><span class="tx"> </span><span class="nm">  </span><span class="tx">:</span><span class="nm">25</span><span class="tx">:</span><span class="nm">1 </span><span class="tx">.</span><span class="nm">942</span><span class="tx">  </span><span class="nm"> 7  </span><span class="tx">  </span></div><div class="l" style="top:628.50px"><span class="tx">  HRZN DB.HRZN SCH.CUSTOMER ORDER SUMMARY</span><span class="tx">                   </span><span class="tx">write</span><span class="tx">                        </span><span class="nm">2</span><span class="tx">   </span><span class="nm">2 25</span><span class="tx"> </span><span class="nm"> 4</span><span class="tx"> </span><span class="nm">22</span><span class="tx"> </span><span class="nm">  </span><span class="tx">:</span><span class="nm">25</span><span class="tx">:</span><span class="nm">11</span><span class="tx">.</span><span class="nm">174</span><span class="tx">  </span><span class="nm"> 7  </span><span class="tx">  </span></div><div class="l" style="top:653.50px"><span class="tx">  HRZN DB.HRZN SCH.CUSTOMER ORDER SUMMARY NY</span><span class="tx">                </span><span class="kw">read</span><span class="tx">                         </span><span class="nm">4</span><span class="tx">   </span><span class="nm">2 25</span><span class="tx"> </span><span class="nm"> 4</span><span class="tx"> </span><span class="nm">23</span><span class="tx"> </span><span class="nm"> 3</span><span class="tx">:</span><span class="nm">31</span><span class="tx">:</span><span class="nm">52</span><span class="tx">.</span><span class="nm">331</span><span class="tx">  </span><span class="nm"> 7  </span><span class="tx">  </span></div><div class="l" style="top:678.50px"><span class="tx">  HRZN DB.HRZN SCH.INVALID EMAIL COUNT</span><span class="tx">                      </span><span class="kw">read</span><span class="tx">                         </span><span class="nm">2</span><span class="tx">   </span><span class="nm">2 25</span><span class="tx"> </span><span class="nm"> 4</span><span class="tx"> </span><span class="nm">21</span><span class="tx"> </span><span class="nm">23</span><span class="tx">:</span><span class="nm">53</span><span class="tx">:</span><span class="nm">17</span><span class="tx">.</span><span class="nm">61 </span><span class="tx">  </span><span class="nm"> 7  </span><span class="tx">  </span></div><div class="l" style="top:703.50px"><span class="tx">  HRZN DB.HRZN SCH.TESTTABLE</span><span class="tx">                                </span><span class="kw">read</span><span class="tx">                         </span><span class="nm">4</span><span class="tx">   </span><span class="nm">2 25</span><span class="tx"> </span><span class="nm"> 4</span><span class="tx"> </span><span class="nm">22</span><span class="tx"> </span><span class="nm">  </span><span class="tx">:</span><span class="nm">2 </span><span class="tx">:</span><span class="nm">37</span><span class="tx">.</span><span class="nm"> 38</span><span class="tx">  </span><span class="nm"> 7  </span><span class="tx">  </span></div><div class="l" style="top:728.50px"><span class="tx">  HRZN DB.TAG SCHEMA.ROW POLICY MAP</span><span class="tx">                         </span><span class="kw">read</span><span class="tx">                         </span><span class="nm">6</span><span class="tx">   </span><span class="nm">2 25</span><span class="tx"> </span><span class="nm"> 4</span><span class="tx"> </span><span class="nm">23</span><span class="tx"> </span><span class="nm">16</span><span class="tx">:</span><span class="nm">35</span><span class="tx">:</span><span class="nm">28</span><span class="tx">.</span><span class="nm">277</span><span class="tx">  </span><span class="nm"> 7  </span><span class="tx">  </span></div>
</body></html>
